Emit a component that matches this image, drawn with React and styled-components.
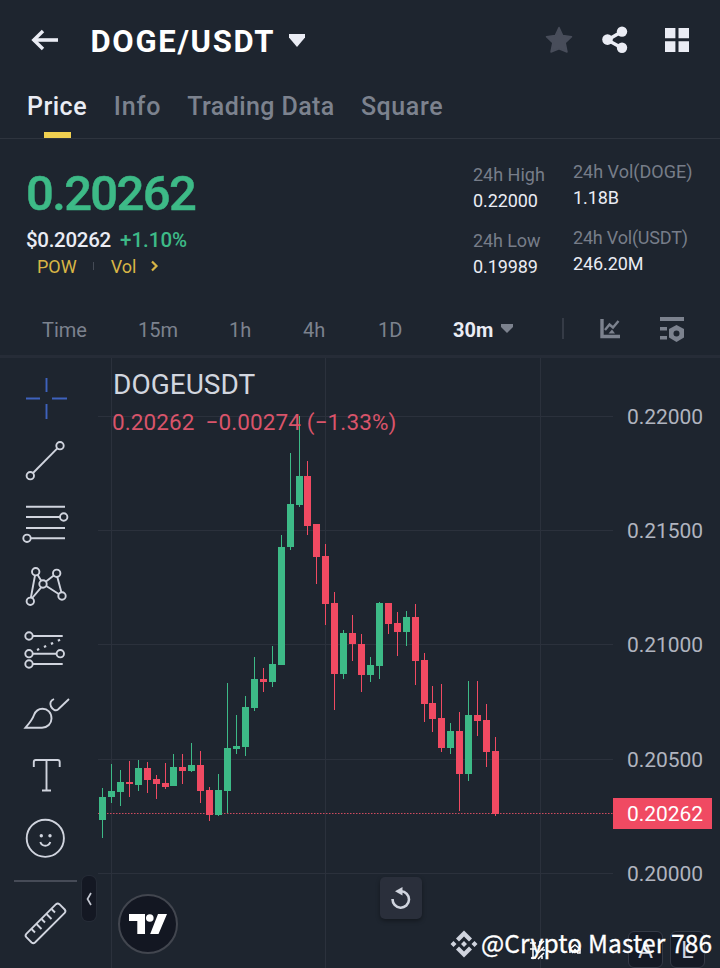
import styled, { createGlobalStyle, css } from "styled-components";

const GlobalStyle = createGlobalStyle`
  * {
    box-sizing: border-box;
  }

  body {
    margin: 0;
    background-color: #1e252f;
    font-family: Roboto, "Liberation Sans", sans-serif;
  }

  svg {
    display: block;
    flex-shrink: 0;
  }
`;

const Screen = styled.div`
  display: flex;
  flex-direction: column;
  width: 720px;
  height: 968px;
  overflow: hidden;
  background-color: #1e252f;
  color: #eaecf4;
  white-space: nowrap;
`;

const Header = styled.header`
  display: flex;
  align-items: center;
  height: 80px;
  padding: 0 31px 0 30px;
`;

const Pair = styled.h1`
  margin: 2px 0 0 30.5px;
  width: 198.5px;
  font-size: 31px;
  font-weight: 700;
  letter-spacing: 1.7px;
  color: #fff;
`;

const HeaderActions = styled.div`
  display: flex;
  align-items: center;
  margin-left: auto;
`;

const ShareIcon = styled.svg`
  margin: 0 37px 0 29px;
`;

const Tabs = styled.nav`
  display: flex;
  height: 59px;
  padding-left: 27px;
  border-bottom: 1px solid #2e343e;
`;

const Tab = styled.a`
  display: flex;
  flex-direction: column;
  align-items: center;
  width: ${({ $width }) => $width}px;
  margin-right: 27px;
  padding-top: 11px;
  font-size: 25px;
  line-height: 31px;
  font-weight: 500;
  letter-spacing: ${({ $spacing }) => $spacing}px;
  color: ${({ $active }) => ($active ? "#eaecf4" : "#7c828e")};

  ${({ $active }) =>
    $active &&
    css`
      &::after {
        content: "";
        width: 27px;
        height: 6px;
        margin-top: 10px;
        background-color: #f0d050;
      }
    `}
`;

const Summary = styled.section`
  display: flex;
  height: 163px;
  padding-left: 27px;
`;

const PriceBlock = styled.div`
  width: 446px;
  padding-top: 29px;
`;

const LastPrice = styled.div`
  margin-left: -1px;
  font-size: 49px;
  line-height: 52px;
  font-weight: 500;
  letter-spacing: -1.65px;
  color: #3dba87;
  -webkit-text-stroke: 0.5px #3dba87;
`;

const FiatRow = styled.div`
  display: flex;
  gap: 10px;
  margin-top: 8px;
  font-size: 20.5px;
  line-height: 25px;
  font-weight: 500;
`;

const FiatPrice = styled.span`
  width: 84px;
  margin-left: -1px;
  letter-spacing: -0.3px;
`;

const Change = styled.span`
  color: #3dba87;
`;

const TagRow = styled.div`
  display: flex;
  align-items: center;
  height: 26px;
  padding-left: 10px;
  font-size: 18px;
  color: #d8b545;
`;

const TagDivider = styled.span`
  width: 1px;
  height: 8px;
  margin: 0 17px 0 16px;
  background-color: #454b56;
`;

const TagArrow = styled.svg`
  margin-left: 14px;
`;

const StatColumn = styled.dl`
  display: flex;
  flex-direction: column;
  gap: 14px;
  width: 100px;
  margin: 0;
  padding-top: ${({ $top }) => $top}px;
`;

const Stat = styled.div`
  line-height: 26px;

  dt {
    font-size: 18px;
    letter-spacing: ${({ $spacing }) => $spacing || 0}px;
    color: #777d89;
  }

  dd {
    margin: 0;
    font-size: 18px;
    letter-spacing: -0.1px;
    color: #eaecf4;
  }
`;

const Intervals = styled.div`
  display: flex;
  align-items: center;
  height: 56px;
  padding-left: 42px;
  border-bottom: 3px solid #262c37;
  font-size: 20px;
  color: #7c828e;
`;

const Interval = styled.span`
  width: ${({ $width }) => $width}px;
  padding-top: 2px;
  ${({ $active }) => $active && "color: #eaecf4; font-weight: 700;"}
`;

const IntervalDivider = styled.span`
  width: 2px;
  height: 21px;
  margin: 0 36px 0 49px;
  background-color: #353b46;
`;

const SettingsIcon = styled.svg`
  margin-left: 39px;
`;

const ChartArea = styled.main`
  position: relative;
  display: grid;
  grid-template-columns: 98px 515px 107px;
  height: 610px;
`;

const Toolbar = styled.aside`
  display: flex;
  flex-direction: column;
  padding: 8px 0 0 14px;
`;

const Tool = styled.div`
  display: flex;
  align-items: center;
  height: 63px;
  padding-left: 8px;
  color: ${({ $active }) => ($active ? "#3e62bd" : "#d0d4de")};
`;

const ToolSeparator = styled.hr`
  width: 63px;
  height: 2px;
  margin: 10px 0 9px;
  border: 0;
  background-color: #464b57;
`;

const Axis = styled.div`
  position: relative;
  padding-left: 14px;
`;

const AxisLabel = styled.div`
  height: 114.2px;
  padding-top: 45px;
  font-size: 21px;
  line-height: 28px;
  letter-spacing: -0.05px;
  color: #b0b4bf;
`;

const PriceTag = styled.div`
  position: absolute;
  top: 440px;
  left: 0;
  width: 99px;
  height: 31px;
  padding: 1px 0 0 14px;
  background-color: #f04a62;
  color: #fff;
  font-size: 21px;
  line-height: 31px;
  letter-spacing: -0.05px;
`;

const Legend = styled.div`
  position: absolute;
  top: 11px;
  left: 112px;
`;

const LegendTitle = styled.div`
  padding-left: 1px;
  font-size: 28px;
  line-height: 32px;
  color: #d2d6df;
`;

const LegendValues = styled.div`
  display: flex;
  gap: 11px;
  margin-top: 6px;
  font-size: 22.5px;
  line-height: 30px;
  letter-spacing: 0.11px;
  color: #d9546a;
`;

const CollapseHandle = styled.div`
  position: absolute;
  top: 518px;
  left: 82px;
  display: grid;
  place-items: center;
  width: 14px;
  height: 45px;
  border-radius: 6px;
  background-color: #141823;
  box-shadow: 0 0 0 1px #252b36;
`;

const BrandBadge = styled.div`
  position: absolute;
  top: 536px;
  left: 118px;
  display: grid;
  place-items: center;
  width: 60px;
  height: 60px;
  border: 2px solid #42464f;
  border-radius: 50%;
  background-color: #131722;
`;

const ResetButton = styled.div`
  position: absolute;
  top: 519px;
  left: 380px;
  display: grid;
  place-items: center;
  width: 42px;
  height: 42px;
  border-radius: 5px;
  background-color: #2a2f3b;
  box-shadow: 0 2px 4px rgba(0, 0, 0, 0.35);
`;

const ScaleToggles = styled.div`
  position: absolute;
  top: 573px;
  left: 628px;
  display: flex;
  gap: 7px;
`;

const ScaleToggle = styled.div`
  width: 35px;
  height: 37px;
  border: 1px solid #353a46;
  border-radius: 6px;
  background-color: #151a25;
  color: #d0d4de;
  font-size: 23px;
  line-height: 37px;
  text-align: center;
`;

const Signature = styled.div`
  position: absolute;
  top: 570px;
  left: 450px;
  display: flex;
  align-items: center;
  gap: 4px;
  height: 32px;
  color: #fff;
`;

const Handle = styled.span`
  margin: -2px 0 0 -1px;
  font-family: "Noto Sans CJK SC", sans-serif;
  font-size: 24.5px;
  line-height: 32px;
  letter-spacing: 0.15px;
  -webkit-text-stroke: 0.3px #fff;
`;

const AxisMarks = styled.svg`
  position: absolute;
  top: 582px;
  left: 529px;
`;

const tabs = [
  { label: "Price", width: 60, spacing: 0.5, active: true },
  { label: "Info", width: 47, spacing: 0.9 },
  { label: "Trading Data", width: 146, spacing: 0.4 },
  { label: "Square", width: 82, spacing: 0.6 },
];

const priceLevels = ["0.22000", "0.21500", "0.21000", "0.20500", "0.20000"];
const gridRows = [416.5, 530.5, 644.5, 759.5, 873.5];
const gridColumns = [111.5, 325.5, 540.5];

// high, body top, body bottom, low, rising
const candles = [
  [788, 797, 820, 838, 1],
  [764, 791, 797, 803, 1],
  [770, 782, 792, 806, 1],
  [761, 782, 784, 797, 0],
  [760, 768, 785, 791, 1],
  [762, 768, 780, 793, 0],
  [775, 779, 784, 799, 0],
  [763, 783, 787, 789, 0],
  [754, 767, 786, 786, 1],
  [754, 767, 771, 784, 0],
  [743, 765, 771, 772, 1],
  [751, 765, 791, 803, 0],
  [787, 790, 815, 821, 0],
  [774, 790, 815, 816, 1],
  [683, 748, 791, 813, 1],
  [715, 746, 749, 754, 1],
  [696, 707, 747, 756, 1],
  [657, 679, 708, 711, 1],
  [668, 679, 682, 692, 0],
  [646, 664, 682, 687, 1],
  [535, 547, 665, 665, 1],
  [453, 504, 547, 550, 1],
  [416, 476, 505, 507, 1],
  [461, 476, 526, 535, 0],
  [524, 524, 557, 584, 0],
  [544, 556, 604, 625, 0],
  [592, 603, 674, 710, 0],
  [630, 633, 674, 679, 1],
  [615, 633, 644, 661, 0],
  [634, 644, 675, 692, 0],
  [657, 665, 675, 682, 1],
  [602, 603, 666, 679, 1],
  [603, 603, 624, 634, 0],
  [612, 623, 632, 656, 0],
  [611, 617, 632, 646, 1],
  [604, 617, 661, 685, 0],
  [653, 660, 704, 722, 0],
  [686, 703, 719, 732, 0],
  [684, 718, 748, 752, 0],
  [723, 731, 748, 754, 1],
  [712, 731, 774, 811, 0],
  [681, 715, 774, 781, 1],
  [681, 715, 721, 736, 0],
  [704, 720, 752, 767, 0],
  [737, 751, 814, 816, 0],
];

const Chart = () => (
  <svg width="515" height="610" viewBox="98 358 515 610">
    <g stroke="#2b313c">
      {gridRows.map((y) => (
        <line key={y} x1="98" x2="613" y1={y} y2={y} />
      ))}
      {gridColumns.map((x) => (
        <line key={x} x1={x} x2={x} y1="358" y2="968" />
      ))}
    </g>
    <line x1="98" x2="613" y1="813.5" y2="813.5" stroke="#d04c60" strokeDasharray="1.5 1.5" />
    {candles.map(([high, top, bottom, low, rising], i) => {
      const x = 102.5 + Math.round(i * 8.932);
      const color = rising ? "#3dba87" : "#f04a62";
      return (
        <g key={i} fill={color}>
          <rect x={x - 0.5} y={high} width="1" height={low - high} />
          <rect x={x - 3.5} y={top} width="7" height={bottom - top} />
        </g>
      );
    })}
  </svg>
);

const ToolIcon = ({ children }) => (
  <svg
    width="48"
    height="48"
    viewBox="0 0 48 48"
    fill="none"
    stroke="currentColor"
    strokeWidth="1.9"
    overflow="visible"
  >
    {children}
  </svg>
);

const tools = [
  <path d="M4 24.5H18M30 24.5H45M24.5 4V18M24.5 30V45" />,
  <>
    <circle cx="38" cy="8.7" r="3.7" />
    <circle cx="8.3" cy="38.7" r="3.7" />
    <path d="M11 36L35.3 11.4" />
  </>,
  <>
    <path d="M4 6.7H43M4 17H38M4 28H43M9 38.3H43" />
    <circle cx="41.7" cy="17" r="3.7" />
    <circle cx="5" cy="38.3" r="3.7" />
  </>,
  <>
    <circle cx="13.7" cy="8.7" r="3.7" />
    <circle cx="34.7" cy="10.3" r="3.7" />
    <circle cx="21" cy="21" r="3.7" />
    <circle cx="8.3" cy="38.3" r="3.7" />
    <circle cx="40" cy="33" r="3.7" />
    <path d="M13 12.5L8.9 34.5M15.7 12L19.2 17.7M19.2 24.4L10.2 35M24 18.6L31.7 12.6M35.3 14L39.4 29.3M24.3 23L36.7 31" />
  </>,
  <>
    <path d="M11 10H40.7M11 27.7H34.5M11 38H40.7" />
    <circle cx="7" cy="10" r="3.7" />
    <circle cx="7" cy="27.7" r="3.7" />
    <circle cx="7" cy="38" r="3.7" />
    <circle cx="38.3" cy="27.7" r="3.7" />
    <path d="M15 24L40 13" strokeWidth="2.2" strokeDasharray="2.4 5.2" />
  </>,
  <>
    <path d="M3.5 38.7H20C25.5 38.7 29.5 34.5 29.5 29.5C29.5 23.5 25.5 19.8 20.5 19.8C16.5 19.8 13.5 22.2 12 26C10.5 30.5 8.5 33 3.5 38.7Z" />
    <path d="M32 10C28.5 11.5 27.5 14.5 29 17.5C30.5 20.5 33.5 22.5 36 20.5L47 10" />
  </>,
  <path d="M11.8 15V10Q11.8 8 13.8 8H35.7Q37.7 8 37.7 10V15M24.5 8V38.5M20 38.5H29" />,
  <>
    <circle cx="23.3" cy="23.3" r="18.6" />
    <circle cx="19.3" cy="20.7" r="1.7" fill="currentColor" stroke="none" />
    <circle cx="28" cy="20.7" r="1.7" fill="currentColor" stroke="none" />
    <path d="M18.3 27C20 32 26.6 32 28.3 27" />
  </>,
];

const App = () => {
  return (
    <>
      <GlobalStyle />
      <Screen>
        <Header>
          <svg width="30" height="24" viewBox="0 0 30 24" fill="none" stroke="#eaecf4">
            <path d="M3.5 12H28" strokeWidth="3.6" />
            <path d="M13 3L3.8 12L13 21" strokeWidth="3.4" />
          </svg>
          <Pair>DOGE/USDT</Pair>
          <svg width="16" height="13" viewBox="0 0 16 13" fill="#eaecf4">
            <path d="M0 0H16V3.5L8 13L0 3.5Z" />
          </svg>
          <HeaderActions>
            <svg width="28" height="28" viewBox="0 0 28 28" fill="#484d5a">
              <path
                d="M14 1.5L17.7 9.6L26.5 10.8L20.2 16.8L22 26L14 22.8L6 26L7.8 16.8L1.5 10.8L10.3 9.6Z"
                stroke="#484d5a"
                strokeWidth="1.5"
                strokeLinejoin="round"
              />
            </svg>
            <ShareIcon width="26" height="28" viewBox="0 0 26 28" fill="#eaecf4">
              <path d="M5.5 14L20 5.5M5.5 14L20 22" stroke="#eaecf4" strokeWidth="3.4" />
              <circle cx="5.5" cy="13.6" r="5.3" />
              <circle cx="20" cy="5.6" r="5.2" />
              <circle cx="20" cy="21.8" r="5.2" />
            </ShareIcon>
            <svg width="24" height="26" viewBox="0 0 24 26" fill="#eaecf4">
              <path d="M0 1H10.4V11.2H0ZM13.5 1H24V11.2H13.5ZM0 14.2H10.4V25H0ZM13.5 14.2H24V25H13.5Z" />
            </svg>
          </HeaderActions>
        </Header>

        <Tabs>
          {tabs.map((tab) => (
            <Tab key={tab.label} $width={tab.width} $spacing={tab.spacing} $active={tab.active}>
              {tab.label}
            </Tab>
          ))}
        </Tabs>

        <Summary>
          <PriceBlock>
            <LastPrice>0.20262</LastPrice>
            <FiatRow>
              <FiatPrice>$0.20262</FiatPrice>
              <Change>+1.10%</Change>
            </FiatRow>
            <TagRow>
              POW
              <TagDivider />
              Vol
              <TagArrow width="9" height="12" viewBox="0 0 9 12" fill="none" stroke="#d8b545" strokeWidth="2.2">
                <path d="M2 1.5L6.5 6L2 10.5" />
              </TagArrow>
            </TagRow>
          </PriceBlock>
          <StatColumn $top={23}>
            <Stat>
              <dt>24h High</dt>
              <dd>0.22000</dd>
            </Stat>
            <Stat $spacing={-0.1}>
              <dt>24h Low</dt>
              <dd>0.19989</dd>
            </Stat>
          </StatColumn>
          <StatColumn $top={20}>
            <Stat>
              <dt>24h Vol(DOGE)</dt>
              <dd>1.18B</dd>
            </Stat>
            <Stat $spacing={-0.2}>
              <dt>24h Vol(USDT)</dt>
              <dd>246.20M</dd>
            </Stat>
          </StatColumn>
        </Summary>

        <Intervals>
          <Interval $width={96}>Time</Interval>
          <Interval $width={91}>15m</Interval>
          <Interval $width={74}>1h</Interval>
          <Interval $width={75}>4h</Interval>
          <Interval $width={75}>1D</Interval>
          <Interval $width={48} $active>
            30m
          </Interval>
          <svg width="12" height="9" viewBox="0 0 12 9" fill="#7c828e">
            <path d="M0 0H12V3L6 9L0 3Z" />
          </svg>
          <IntervalDivider />
          <svg width="21" height="22" viewBox="0 0 21 22" fill="none" stroke="#7c828e" strokeWidth="3.4">
            <path d="M2 1V18.5H20" />
            <path d="M5 12L9.5 6.5L13 9.5L18.5 3" strokeWidth="2.4" />
            <path d="M8.5 15.5L12 11.5L15 15.5Z" fill="#7c828e" stroke="none" />
          </svg>
          <SettingsIcon width="25" height="26" viewBox="0 0 25 26" fill="#7c828e">
            <path d="M0 1H24V5H0ZM0 11H7V14.5H0ZM0 20H7V23.5H0Z" />
            <path
              fillRule="evenodd"
              d="M16.5 9L24 13V21.5L16.5 26L9 21.5V13ZM16.5 14.5A3 3 0 1 0 16.5 20.5A3 3 0 1 0 16.5 14.5Z"
            />
          </SettingsIcon>
        </Intervals>

        <ChartArea>
          <Toolbar>
            {tools.map((icon, i) => (
              <Tool key={i} $active={i === 0}>
                <ToolIcon>{icon}</ToolIcon>
              </Tool>
            ))}
            <ToolSeparator />
            <Tool>
              <ToolIcon>
                <path d="M34 5.2Q35.7 3.7 37.4 5.2L42.7 10.5Q44.2 12.2 42.7 13.9L13 43.5Q11.3 45 9.6 43.5L4.3 38.2Q2.8 36.5 4.3 34.8Z" />
                <path d="M9.5 30L13 33.5M14.5 25L19.5 30M19.5 20L23 23.5M24.5 15L29.5 20M29.5 10L33 13.5" />
              </ToolIcon>
            </Tool>
          </Toolbar>

          <Chart />

          <Axis>
            {priceLevels.map((level) => (
              <AxisLabel key={level}>{level}</AxisLabel>
            ))}
            <PriceTag>0.20262</PriceTag>
          </Axis>

          <Legend>
            <LegendTitle>DOGEUSDT</LegendTitle>
            <LegendValues>
              <span>0.20262</span>
              <span>−0.00274 (−1.33%)</span>
            </LegendValues>
          </Legend>

          <CollapseHandle>
            <svg width="6" height="14" viewBox="0 0 6 14" fill="none" stroke="#c3c7d1" strokeWidth="1.7">
              <path d="M5 1L1.5 7L5 13" />
            </svg>
          </CollapseHandle>

          <BrandBadge>
            <svg width="38" height="20" viewBox="0 0 38 20" fill="#fff">
              <path d="M0 0H16V20H8.3V7H0ZM29 0H38L29.5 20H21.2Z" />
              <circle cx="20.8" cy="4" r="3.8" />
            </svg>
          </BrandBadge>

          <ResetButton>
            <svg width="20" height="22" viewBox="0 0 20 22" fill="none">
              <path d="M1.6 12A8.2 8.2 0 1 0 10 4.3" stroke="#d0d4de" strokeWidth="2.6" />
              <path d="M4 4.3L11.5 0V8.5Z" fill="#d0d4de" />
            </svg>
          </ResetButton>

          <ScaleToggles>
            <ScaleToggle>A</ScaleToggle>
            <ScaleToggle>L</ScaleToggle>
          </ScaleToggles>

          <AxisMarks width="54" height="20" viewBox="0 0 54 20" fill="none" stroke="#fff" strokeWidth="1.5">
            <path d="M1 3H7M1 9H7M2 18H7M4 3V18M9 7L15 1M9 13L15 7M9 19L15 13M11 1V5M12 10H16M13 16V19" />
            <path d="M41 13V9L46 5L51 9V13H48M43 13L46 9.500L49 12" />
          </AxisMarks>

          <Signature>
            <svg width="28" height="28" viewBox="0 0 28 28" fill="#d0d4de">
              <path d="M14 0.5L22 8.5L19 11.5L14 6.5L9 11.5L6 8.5Z" />
              <path d="M14 27.5L22 19.5L19 16.5L14 21.5L9 16.5L6 19.5Z" />
              <path d="M14 11L17 14L14 17L11 14ZM3.5 11L6.5 14L3.5 17L0.5 14ZM24.5 11L27.5 14L24.5 17L21.5 14Z" />
            </svg>
            <Handle>@Crypto Master 786</Handle>
          </Signature>
        </ChartArea>
      </Screen>
    </>
  );
};

export default App;
